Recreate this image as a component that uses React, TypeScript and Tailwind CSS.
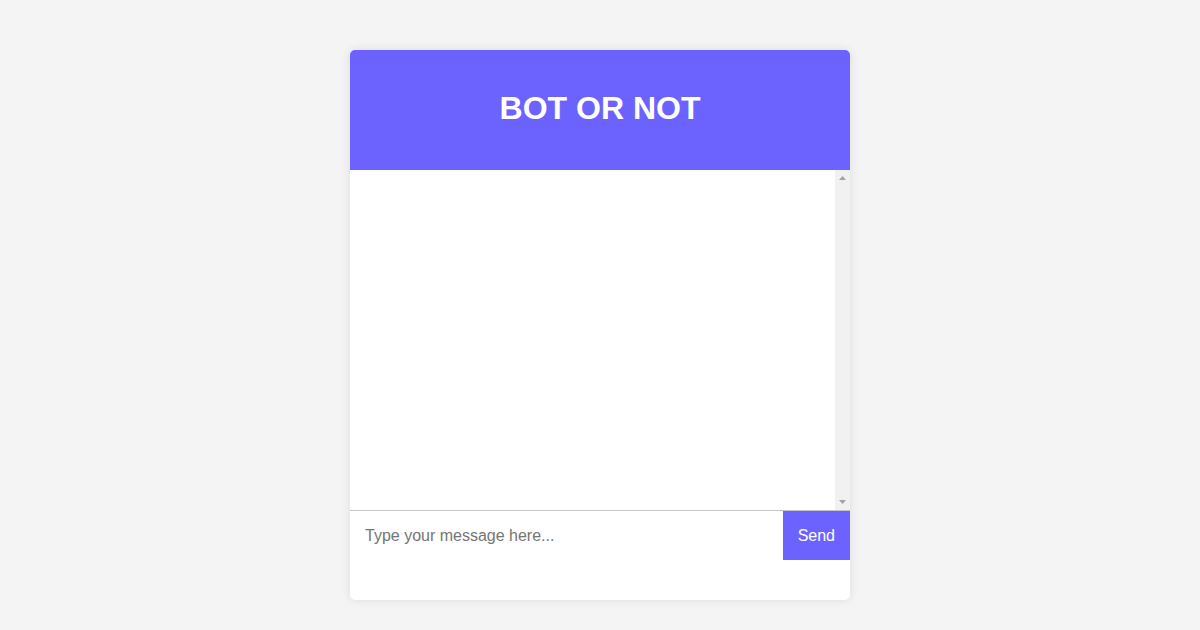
function ScrollTrack() {
  return (
    <div className="flex w-[15px] flex-col items-center justify-between bg-[#f1f1f1] py-[6px]">
      <svg width="7" height="4" viewBox="0 0 7 4">
        <path d="M3.5 0 L7 4 L0 4 Z" fill="#a3a3a3" />
      </svg>
      <svg width="7" height="4" viewBox="0 0 7 4">
        <path d="M0 0 L7 0 L3.5 4 Z" fill="#a3a3a3" />
      </svg>
    </div>
  );
}

export default function App() {
  return (
    <div
      className="min-h-[630px] w-full bg-[#f4f4f4] pt-[50px]"
      style={{ fontFamily: '"Liberation Sans", Arial, sans-serif' }}
    >
      <div className="mx-auto flex h-[550px] w-[500px] flex-col overflow-hidden rounded-[5px] bg-white shadow-[0_0_10px_rgba(0,0,0,0.1)]">
        <div className="flex h-[120px] items-center justify-center bg-[#6c63ff] pb-[4px]">
          <h1 className="text-[32px] font-bold leading-none text-white">BOT OR NOT</h1>
        </div>
        <div className="flex h-[340px]">
          <div className="flex-1 bg-white"></div>
          <ScrollTrack />
        </div>
        <div className="flex h-[50px] border-t border-[#c4c4c4]">
          <input
            type="text"
            placeholder="Type your message here..."
            className="min-w-0 flex-1 bg-white px-[15px] text-[16px] text-[#333] outline-none placeholder:text-[#757575]"
          />
          <button className="bg-[#6c63ff] px-[15px] text-[16px] text-white">Send</button>
        </div>
      </div>
    </div>
  );
}
